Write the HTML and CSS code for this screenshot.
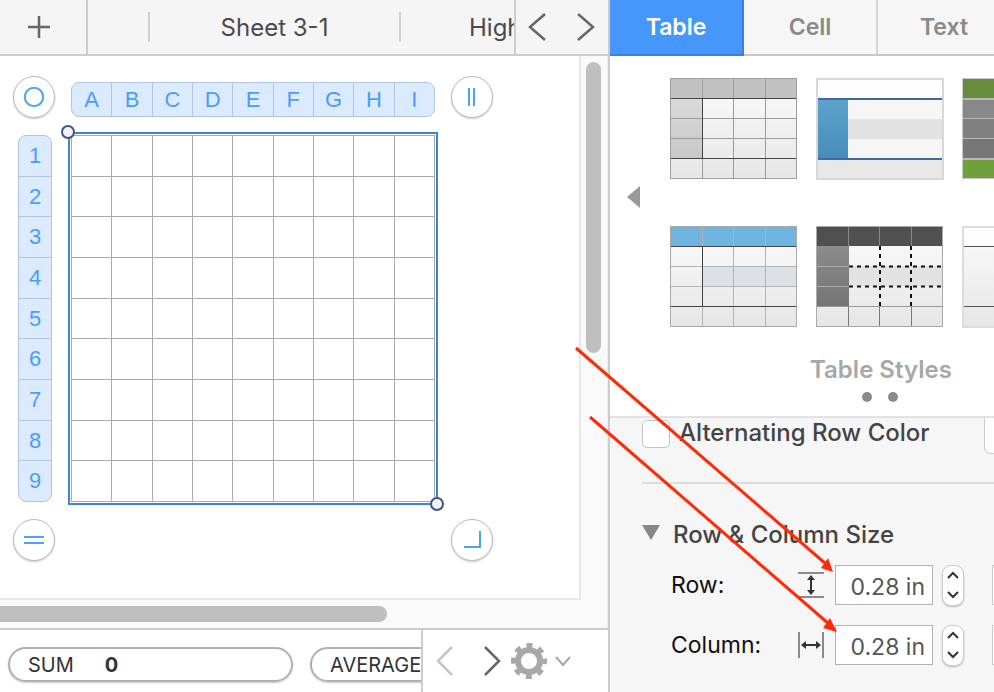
FILE: index.html

```html
<!DOCTYPE html>
<html lang="en">
<head>
  <meta charset="UTF-8">
  <title>Table Inspector</title>
  <link rel="stylesheet" href="styles.css">
</head>
<body>
  <div class="app">
    <div class="editor">
      <div class="toolbar">
        <div class="add-sheet">
          <svg width="24" height="24" viewBox="0 0 24 24"><path d="M12 1v22M1 12h22" class="stroke-dark"/></svg>
        </div>
        <div class="sheet-tabs">
          <span class="tab-gap"></span>
          <span class="tab-sep"></span>
          <span class="sheet-tab">Sheet 3-1</span>
          <span class="tab-sep"></span>
          <span class="sheet-tab next">Highlights</span>
        </div>
        <div class="tab-nav">
          <svg width="18" height="28" viewBox="0 0 18 28"><path d="M17 1L2 14l15 13" class="stroke-dark"/></svg>
          <svg width="18" height="28" viewBox="0 0 18 28"><path d="M1 1l15 13L1 27" class="stroke-dark"/></svg>
        </div>
      </div>

      <div class="sheet-area">
        <div class="canvas">
          <div class="table-edit">
            <div class="round-btn">
              <svg width="22" height="22" viewBox="0 0 22 22"><circle cx="11" cy="11" r="9.2" class="stroke-blue"/></svg>
            </div>
            <div class="col-heads">
              <span>A</span><span>B</span><span>C</span><span>D</span><span>E</span><span>F</span><span>G</span><span>H</span><span>I</span>
            </div>
            <div class="round-btn">
              <svg width="22" height="22" viewBox="0 0 22 22"><path d="M8 2v18M13 2v18" class="stroke-blue"/></svg>
            </div>

            <div class="row-heads">
              <span>1</span><span>2</span><span>3</span><span>4</span><span>5</span><span>6</span><span>7</span><span>8</span><span>9</span>
            </div>
            <div class="cells">
              <span class="handle handle-start"></span>
              <span class="handle handle-end"></span>
            </div>
            <div></div>

            <div class="round-btn">
              <svg width="22" height="22" viewBox="0 0 22 22"><path d="M1 8h20M1 14h20" class="stroke-blue"/></svg>
            </div>
            <div></div>
            <div class="round-btn">
              <svg width="22" height="22" viewBox="0 0 22 22"><path d="M3 18h16V2" class="stroke-blue"/></svg>
            </div>
          </div>
        </div>
        <div class="vscroll"><div class="vthumb"></div></div>
        <div class="hscroll"><div class="hthumb"></div></div>
      </div>

      <div class="statusbar">
        <div class="pills">
          <div class="pill pill-sum"><span>SUM</span><b>0</b></div>
          <div class="pill"><span>AVERAGE</span></div>
        </div>
        <div class="status-nav">
          <svg class="prev-page" width="20" height="30" viewBox="0 0 20 30"><path d="M17 1L3 15l14 14" class="stroke-light"/></svg>
          <svg class="next-page" width="20" height="30" viewBox="0 0 20 30"><path d="M3 1l14 14L3 29" class="stroke-dark"/></svg>
          <svg class="gear" width="38" height="38" viewBox="0 0 38 38">
            <circle cx="19" cy="19" r="11" fill="none" stroke="#a8a8a8" stroke-width="6"/>
            <circle cx="19" cy="19" r="15.5" fill="none" stroke="#a8a8a8" stroke-width="5" stroke-dasharray="6 6.17" stroke-dashoffset="3"/>
          </svg>
          <svg width="16" height="11" viewBox="0 0 16 11"><path d="M1 1l7 8 7-8" fill="none" stroke="#a8a8a8" stroke-width="2"/></svg>
        </div>
      </div>
    </div>

    <div class="inspector">
      <div class="insp-tabs">
        <div class="insp-tab active">Table</div>
        <div class="insp-tab">Cell</div>
        <div class="insp-tab">Text</div>
      </div>

      <div class="styles-box">
        <div class="styles-row">
          <span class="prev-styles"></span>
          <div class="thumbs">
            <svg class="thumb" viewBox="0 0 128 102">
              <defs>
                <linearGradient id="body" x1="0" y1="0" x2="0" y2="1"><stop offset="0" stop-color="#fbfbfb"/><stop offset="1" stop-color="#e6e6e6"/></linearGradient>
                <linearGradient id="side" x1="0" y1="0" x2="0" y2="1"><stop offset="0" stop-color="#dadada"/><stop offset="1" stop-color="#c8c8c8"/></linearGradient>
                <linearGradient id="bluecol" x1="0" y1="0" x2="0" y2="1"><stop offset="0" stop-color="#5ca3cc"/><stop offset="1" stop-color="#478dba"/></linearGradient>
                <linearGradient id="greycol" x1="0" y1="0" x2="0" y2="1"><stop offset="0" stop-color="#8b8b8b"/><stop offset="1" stop-color="#757575"/></linearGradient>
              </defs>
              <rect x="1" y="1" width="126" height="99" fill="url(#body)"/>
              <rect x="1" y="1" width="126" height="19" fill="#c0c1c0"/>
              <rect x="1" y="20" width="32" height="60" fill="url(#side)"/>
              <path d="M32.5 1v99M63.5 1v99M95.5 1v99M1 40.5h126M1 60.5h126" stroke="#9c9c9c" fill="none"/>
              <path d="M1 20.5h126M1 80.5h126M32.5 20v60" stroke="#444" fill="none"/>
              <rect x=".5" y=".5" width="126" height="100" stroke="#9f9f9f" fill="none"/>
            </svg>
            <svg class="thumb" viewBox="0 0 128 102">
              <rect x="1" y="1" width="126" height="100" fill="#e8e8e8" stroke="#d8d8d8" stroke-width="2"/>
              <rect x="2" y="2" width="124" height="18" fill="#fdfdfd"/>
              <rect x="2" y="22" width="124" height="58" fill="#f6f6f6"/>
              <rect x="32" y="41" width="94" height="20" fill="#e2e2e2"/>
              <rect x="2" y="22" width="30" height="58" fill="url(#bluecol)"/>
              <path d="M2 21h124M2 81h124" stroke="#44689a" stroke-width="2"/>
            </svg>
            <svg class="thumb" viewBox="0 0 128 102">
              <rect x="1" y="1" width="126" height="99" fill="#b8b8b8"/>
              <rect x="1" y="1" width="126" height="19" fill="#688d3c"/>
              <rect x="1" y="22" width="126" height="18" fill="#888"/>
              <rect x="1" y="41" width="126" height="19" fill="#808080"/>
              <rect x="1" y="61" width="126" height="19" fill="#777"/>
              <rect x="1" y="82" width="126" height="18" fill="#70a03a"/>
              <rect x=".5" y=".5" width="127" height="100" stroke="#c8c8c8" fill="none"/>
            </svg>
            <svg class="thumb" viewBox="0 0 128 102">
              <rect x="1" y="1" width="126" height="99" fill="url(#body)"/>
              <rect x="1" y="1" width="126" height="19" fill="#6fb3e0"/>
              <rect x="33" y="40" width="94" height="20" fill="#dbe1e5"/>
              <path d="M32.5 1v99M63.5 1v99M95.5 1v99M1 40.5h126M1 60.5h126" stroke="#b4b4b4" fill="none"/>
              <path d="M1 20.5h126M1 80.5h126M32.5 20v60" stroke="#444" fill="none"/>
              <rect x=".5" y=".5" width="126" height="100" stroke="#aaa" fill="none"/>
            </svg>
            <svg class="thumb" viewBox="0 0 128 102">
              <rect x="1" y="1" width="125" height="99" fill="url(#body)"/>
              <rect x="33" y="40" width="93" height="20" fill="#e2e2e2"/>
              <rect x="1" y="1" width="125" height="19" fill="#505050"/>
              <rect x="1" y="20" width="32" height="60" fill="url(#greycol)"/>
              <path d="M32.5 1v19M63.5 1v19M95.5 1v19" stroke="#888" fill="none"/>
              <path d="M1 40.5h32M1 60.5h32" stroke="#aaa" fill="none"/>
              <path d="M32.5 80v20M63.5 80v20M95.5 80v20" stroke="#777" fill="none"/>
              <path d="M1 80.5h125" stroke="#999" fill="none"/>
              <path d="M64 20v60M95 20v60M33 40.5h93M33 60.5h93" stroke="#111" fill="none" stroke-width="2" stroke-dasharray="4 4"/>
              <rect x=".5" y=".5" width="126" height="100" stroke="#aaa" fill="none"/>
            </svg>
            <svg class="thumb" viewBox="0 0 128 102">
              <rect x="1" y="1" width="126" height="100" fill="url(#body)" stroke="#dcdcdc" stroke-width="2"/>
              <rect x="2" y="2" width="124" height="18" fill="#fdfdfd"/>
              <path d="M2 20.5h124M2 80.5h124" stroke="#555" fill="none"/>
            </svg>
          </div>
        </div>
        <div class="styles-title">Table Styles</div>
        <div class="dots"><span></span><span></span></div>
      </div>

      <div class="options">
        <div class="alt-row">
          <span class="checkbox"></span>
          <span class="alt-label">Alternating Row Color</span>
          <span class="alt-btn"></span>
        </div>
        <div class="divider"></div>
        <div class="size-head"><span class="disclosure"></span>Row &amp; Column Size</div>
        <div class="size-row">
          <span class="size-label">Row:</span>
          <svg width="26" height="26" viewBox="0 0 26 26"><path d="M0 1h26M0 25h26" stroke="#8a8a8a" stroke-width="2" fill="none"/><path d="M13 5v16" stroke="#333" stroke-width="2"/><path d="M9 8l4-5 4 5zM9 18l4 5 4-5z" fill="#333"/></svg>
          <span class="size-input">0.28 in</span>
          <span class="stepper"><svg width="14" height="32" viewBox="0 0 14 32"><path d="M2 9l5-5 5 5M2 23l5 5 5-5" fill="none" stroke="#333" stroke-width="2"/></svg></span>
          <span class="size-extra"></span>
        </div>
        <div class="size-row">
          <span class="size-label">Column:</span>
          <svg width="26" height="26" viewBox="0 0 26 26"><path d="M1 0v26M25 0v26" stroke="#8a8a8a" stroke-width="2" fill="none"/><path d="M5 13h16" stroke="#333" stroke-width="2"/><path d="M8 9l-5 4 5 4zM18 9l5 4-5 4z" fill="#333"/></svg>
          <span class="size-input">0.28 in</span>
          <span class="stepper"><svg width="14" height="32" viewBox="0 0 14 32"><path d="M2 9l5-5 5 5M2 23l5 5 5-5" fill="none" stroke="#333" stroke-width="2"/></svg></span>
          <span class="size-extra"></span>
        </div>
      </div>
    </div>
  </div>

  <svg class="callouts" width="994" height="692" viewBox="0 0 994 692">
    <path d="M576 348L826 564M590 417L829 624" stroke="#ff2a08" stroke-width="3" fill="none"/>
    <path d="M833 572L821 568 828 558zM837 632L823 628 830 618z" fill="#ff2a08"/>
  </svg>
</body>
</html>
```

FILE: styles.css

```css
* {
  box-sizing: border-box;
}

body {
  margin: 0;
  width: 994px;
  height: 692px;
  overflow: hidden;
  position: relative;
  font-family: Inter, "Liberation Sans", Arial, sans-serif;
  background: #fff;
  color: #444;
}

svg {
  display: block;
  flex-shrink: 0;
}

.stroke-dark, .stroke-light, .stroke-blue {
  fill: none;
  stroke-width: 2.5;
}
.stroke-dark { stroke: #666; }
.stroke-light { stroke: #c4c4c4; }
.stroke-blue { stroke: #4aa3fb; stroke-width: 2; }

.app {
  display: flex;
  height: 692px;
}

/* left side */
.editor {
  width: 610px;
  flex-shrink: 0;
  display: flex;
  flex-direction: column;
  border-right: 2px solid #ccc;
}

.toolbar {
  height: 56px;
  display: flex;
  background: #f5f5f5;
  border-bottom: 2px solid #ccc;
}

.add-sheet {
  width: 88px;
  display: flex;
  align-items: center;
  padding-left: 27px;
  border-right: 2px solid #ccc;
}

.sheet-tabs {
  width: 426px;
  display: flex;
  align-items: center;
  overflow: hidden;
}

.tab-gap {
  width: 60px;
  flex-shrink: 0;
}

.tab-sep {
  width: 2px;
  height: 30px;
  flex-shrink: 0;
  background: #d0d0d0;
}

.sheet-tab {
  width: 249px;
  flex-shrink: 0;
  text-align: center;
  font-size: 24px;
  color: #4a4a4a;
}

.sheet-tab.next {
  text-align: left;
  padding-left: 68px;
  white-space: nowrap;
}

.tab-nav {
  flex: 1;
  display: flex;
  align-items: center;
  justify-content: space-between;
  padding: 0 13px 0 12px;
  border-left: 2px solid #ccc;
}

.sheet-area {
  height: 574px;
  display: grid;
  grid-template-columns: 581px 1fr;
  grid-template-rows: 544px 1fr;
  background: #fafafa;
  border-bottom: 2px solid #ccc;
}

.canvas {
  background: #fff;
  border-right: 2px solid #e8e8e8;
  border-bottom: 2px solid #e8e8e8;
  padding: 20px 0 0 13px;
}

.table-edit {
  display: grid;
  grid-template-columns: 42px 364px 42px;
  grid-template-rows: 42px 367px 42px;
  gap: 16px;
  row-gap: 17px;
}

.round-btn {
  width: 42px;
  height: 42px;
  border-radius: 50%;
  background: #fff;
  border: 1px solid #bbb;
  box-shadow: 0 1px 2px rgba(0, 0, 0, .2);
  display: flex;
  align-items: center;
  justify-content: center;
}

.col-heads, .row-heads {
  display: flex;
  background: #dbeafc;
  border: 1px solid #aec6e2;
  border-radius: 8px;
  color: #4a9df8;
  font-family: "Liberation Sans", Arial, sans-serif;
  font-size: 22px;
  overflow: hidden;
}

.col-heads {
  height: 35px;
  margin-top: 6px;
}

.row-heads {
  flex-direction: column;
  width: 34px;
  margin-left: 5px;
}

.col-heads span, .row-heads span {
  flex: 1;
  display: flex;
  align-items: center;
  justify-content: center;
}

.col-heads span + span {
  border-left: 1px solid #aec6e2;
}

.row-heads span + span {
  border-top: 1px solid #aec6e2;
}

.cells {
  position: relative;
  background-color: #fff;
  background-image:
    repeating-linear-gradient(to right, #aaa 0 1px, transparent 1px 40.33px),
    repeating-linear-gradient(to bottom, #aaa 0 1px, transparent 1px 40.67px);
  border-right: 1px solid #aaa;
  border-bottom: 1px solid #aaa;
}

.cells::after {
  content: "";
  position: absolute;
  inset: -3px -4px -4px -3px;
  border: 2px solid #3a85d8;
}

.handle {
  position: absolute;
  z-index: 1;
  width: 14px;
  height: 14px;
  border-radius: 50%;
  background: #f2f2f2;
  border: 2px solid #3e5590;
}

.handle-start {
  left: -10px;
  top: -10px;
}

.handle-end {
  right: -10px;
  bottom: -10px;
}

.vscroll {
  padding: 6px 6px 0 5px;
  grid-row: 1 / 3;
  grid-column: 2;
  border-right: 1px solid #eee;
}

.vthumb {
  height: 291px;
  border-radius: 8px;
  background: #bfbfbf;
}

.hscroll {
  padding-top: 6px;
}

.hthumb {
  width: 387px;
  height: 16px;
  border-radius: 0 8px 8px 0;
  background: #bfbfbf;
}

.statusbar {
  flex: 1;
  display: flex;
}

.pills {
  width: 421px;
  display: flex;
  gap: 17px;
  padding: 17px 0 0 8px;
  overflow: hidden;
}

.pill {
  width: 285px;
  height: 35px;
  flex-shrink: 0;
  display: flex;
  align-items: center;
  padding: 0 18px;
  border: 2px solid #b0b0b0;
  border-radius: 18px;
  box-shadow: 0 1px 2px rgba(0, 0, 0, .2);
  font-size: 20px;
  color: #333;
}

.pill b {
  margin-left: 31px;
}

.status-nav {
  flex: 1;
  display: flex;
  align-items: center;
  border-left: 2px solid #ccc;
  padding-left: 12px;
}

.next-page {
  margin-left: 27px;
}

.gear {
  margin: 0 7px 0 8px;
}

/* right side */
.inspector {
  flex: 1;
  min-width: 0;
  display: flex;
  flex-direction: column;
  overflow: hidden;
}

.insp-tabs {
  height: 56px;
  display: flex;
  background: #f6f6f6;
  border-bottom: 2px solid #c4c8cc;
}

.insp-tab {
  width: 134px;
  flex-shrink: 0;
  display: flex;
  align-items: center;
  justify-content: center;
  font-size: 23px;
  font-weight: 600;
  color: #8a8a8a;
  border-right: 2px solid #d4d4d4;
}

.insp-tab.active {
  background: #4597fb;
  color: #fff;
  border-right-color: #3c80d8;
  box-shadow: 0 2px 0 #3c80d8;
}

.styles-box {
  height: 362px;
  border-bottom: 2px solid #e2e2e2;
}

.styles-row {
  display: flex;
  padding: 22px 0 0 17px;
}

.prev-styles {
  width: 0;
  height: 0;
  flex-shrink: 0;
  margin: 108px 30px 0 0;
  border-top: 11px solid transparent;
  border-bottom: 11px solid transparent;
  border-right: 13px solid #999;
}

.thumbs {
  display: grid;
  grid-template-columns: repeat(3, 128px);
  grid-auto-rows: 102px;
  column-gap: 18px;
  row-gap: 46px;
}

.thumb {
  width: 128px;
  height: 102px;
}

.styles-title {
  margin: 27px 0 0 200px;
  font-size: 24px;
  font-weight: 600;
  color: #a8a8a8;
}

.dots {
  display: flex;
  gap: 16px;
  margin: 8px 0 0 252px;
}

.dots span {
  width: 10px;
  height: 10px;
  border-radius: 50%;
  background: #8c8c8c;
}

.options {
  flex: 1;
  background: #f6f6f6;
  padding-left: 32px;
}

.alt-row {
  display: flex;
  height: 36px;
}

.checkbox {
  width: 28px;
  height: 28px;
  flex-shrink: 0;
  margin: 2px 9px 0 0;
  background: #fff;
  border: 1px solid #c4c4c4;
  border-radius: 5px;
}

.alt-label {
  width: 305px;
  flex-shrink: 0;
  font-size: 24px;
  font-weight: 500;
  line-height: 30px;
  color: #444;
  white-space: nowrap;
}

.alt-btn {
  width: 60px;
  flex-shrink: 0;
  background: #fff;
  border: 1px solid #ccc;
  border-top: 0;
  border-radius: 0 0 0 7px;
}

.divider {
  height: 2px;
  margin-top: 28px;
  background: #ddd;
}

.size-head {
  display: flex;
  align-items: center;
  margin-top: 36px;
  font-size: 24px;
  font-weight: 500;
  color: #444;
  white-space: nowrap;
}

.disclosure {
  width: 0;
  height: 0;
  margin: 0 13px 4px 0;
  border-left: 9px solid transparent;
  border-right: 9px solid transparent;
  border-top: 15px solid #888;
}

.size-row {
  display: flex;
  align-items: center;
  height: 40px;
  margin-left: 29px;
  white-space: nowrap;
}

.size-head + .size-row {
  margin-top: 16px;
}

.size-row + .size-row {
  margin-top: 20px;
}

.size-label {
  width: 127px;
  flex-shrink: 0;
  font-size: 23px;
  color: #111;
}

.size-input {
  width: 98px;
  height: 40px;
  flex-shrink: 0;
  margin-left: 11px;
  padding-right: 7px;
  background: #fff;
  border: 1px solid #b4b4b4;
  font-size: 23px;
  line-height: 42px;
  text-align: right;
  color: #555;
}

.stepper {
  width: 22px;
  height: 41px;
  flex-shrink: 0;
  margin-left: 9px;
  display: flex;
  align-items: center;
  justify-content: center;
  background: #fff;
  border: 1px solid #ccc;
  border-radius: 9px;
  box-shadow: 0 1px 2px rgba(0, 0, 0, .25);
}

.size-extra {
  width: 20px;
  height: 40px;
  flex-shrink: 0;
  margin-left: 28px;
  background: #fff;
  border: 1px solid #ccc;
}

/* red annotation arrows drawn over the screenshot */
.callouts {
  position: absolute;
  left: 0;
  top: 0;
  pointer-events: none;
}
```
